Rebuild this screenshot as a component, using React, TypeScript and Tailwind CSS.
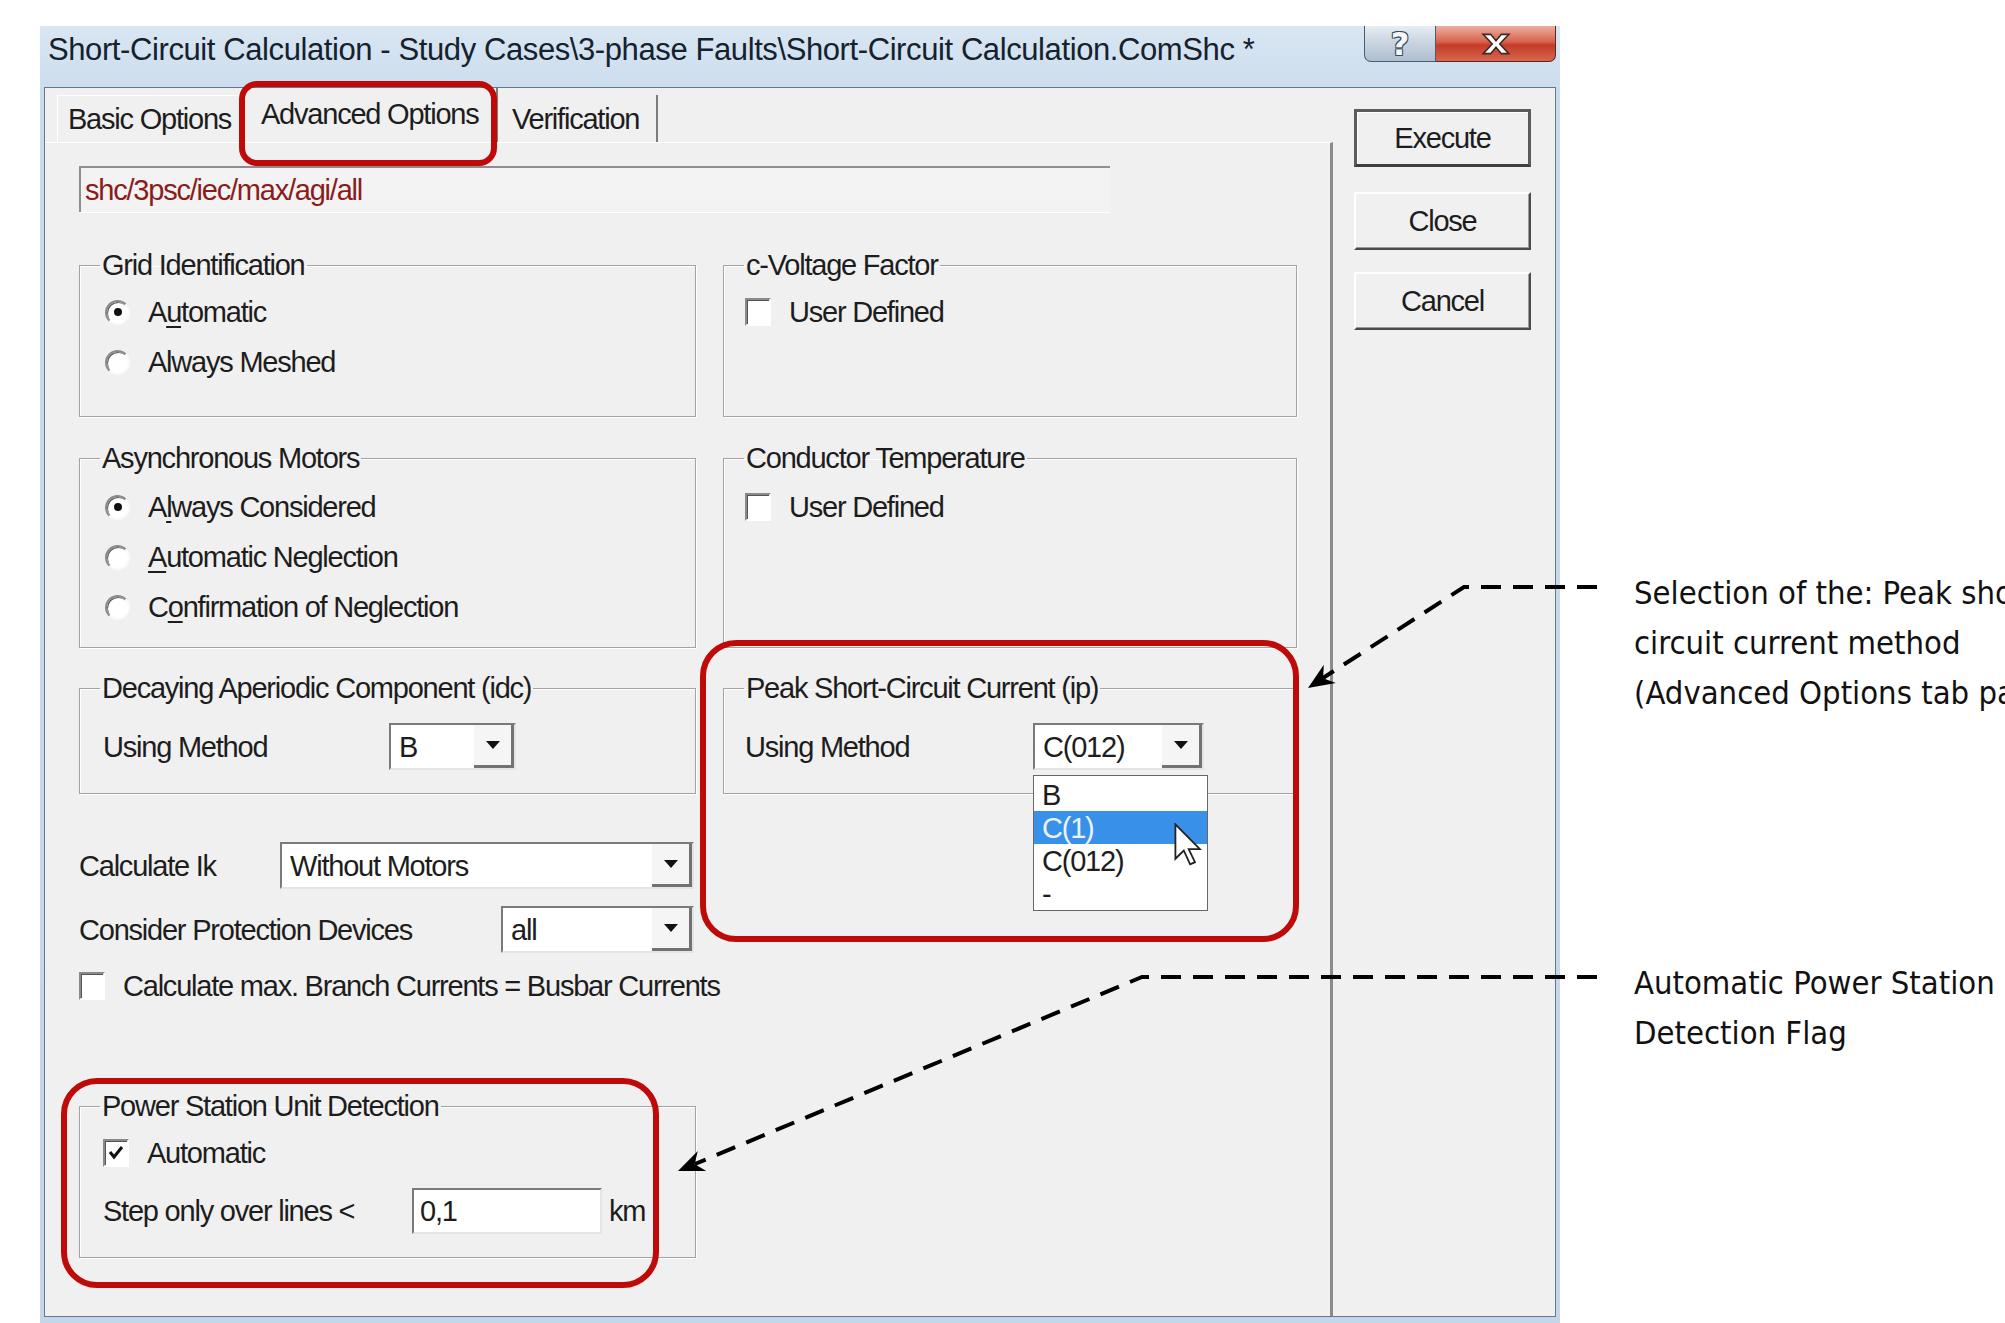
import clsx from "clsx";
import type { ReactNode } from "react";

const ui = "font-['Liberation_Sans',Arial,sans-serif]";
const note = "font-['DejaVu_Sans_Condensed','DejaVu_Sans',sans-serif]";

function Radio({ checked = false }: { checked?: boolean }) {
  return (
    <span className="flex h-[25px] w-[25px] shrink-0 items-center justify-center rounded-full border-2 border-t-[#8a8a8a] border-l-[#8a8a8a] border-b-[#fafafa] border-r-[#fafafa] bg-white shadow-[inset_1px_1px_0_#5c5c5c]">
      {checked && <span className="h-[8px] w-[8px] rounded-full bg-[#111]" />}
    </span>
  );
}

function Check({ checked = false }: { checked?: boolean }) {
  return (
    <span className="flex h-[28px] w-[26px] shrink-0 items-center justify-center border-2 border-t-[#8a8a8a] border-l-[#8a8a8a] border-b-white border-r-white bg-white shadow-[inset_1px_1px_0_#555]">
      {checked && (
        <svg width="18" height="18" viewBox="0 0 18 18">
          <path d="M3 8 L7 13 L15 3" stroke="#111" strokeWidth="3" fill="none" />
        </svg>
      )}
    </span>
  );
}

function Combo({ value, className }: { value: string; className: string }) {
  return (
    <div
      className={clsx(
        "flex h-[47px] shrink-0 border-2 border-t-[#7a7a7a] border-l-[#7a7a7a] border-b-[#e4e4e4] border-r-[#e4e4e4] bg-white",
        className,
      )}
    >
      <span className="flex flex-1 items-center pl-[8px]">{value}</span>
      <span className="flex w-[40px] items-center justify-center border-b-[3px] border-r-[3px] border-[#727272] bg-[#f5f5f5]">
        <svg width="14" height="8" viewBox="0 0 14 8">
          <path d="M0 0H14L7 8Z" fill="#111" />
        </svg>
      </span>
    </div>
  );
}

function Group({ title, className, children }: { title: string; className: string; children?: ReactNode }) {
  return (
    <fieldset
      className={clsx(
        "shrink-0 border border-[#a3a3a3] shadow-[inset_1px_1px_0_#fff,1px_1px_0_#fff]",
        className,
      )}
    >
      <legend className="ml-[20px] px-[2px]">{title}</legend>
      {children}
    </fieldset>
  );
}

function Option({ mark, children }: { mark: ReactNode; children: ReactNode }) {
  return (
    <div className="flex h-[50px] items-center gap-[18px]">
      {mark}
      <span>{children}</span>
    </div>
  );
}

function Button({ label, primary = false }: { label: string; primary?: boolean }) {
  return (
    <div
      className={clsx(
        "flex h-[58px] w-[177px] items-center justify-center bg-[#f0f0f0]",
        primary
          ? "border-[3px] border-[#5b5b5b] border-b-[#3f3f3f] shadow-[inset_1px_1px_0_#fff]"
          : "border-2 border-t-white border-l-white border-b-[#4a4a4a] border-r-[#4a4a4a] shadow-[inset_-1px_-1px_0_#9a9a9a]",
      )}
    >
      {label}
    </div>
  );
}

function Arrows() {
  return (
    <svg className="pointer-events-none absolute left-0 top-0" width="2005" height="1323">
      <g stroke="#000" strokeWidth="4" strokeDasharray="20 12" fill="none">
        <path d="M1597 587 H1464 L1323 678" />
        <path d="M1597 977 H1142 L695 1164" />
      </g>
      <polygon points="1308,688 1335.8,683.1 1323.1,678.2 1323.8,664.7" fill="#000" />
      <polygon points="678,1171 706.2,1171.1 694.6,1164.1 697.8,1150.9" fill="#000" />
    </svg>
  );
}

export default function App() {
  return (
    <div className="relative flex h-[1323px] w-[2005px] overflow-hidden whitespace-nowrap bg-white">
      {/* dialog window */}
      <div
        className={clsx(
          ui,
          "ml-[40px] mt-[26px] flex h-[1297px] w-[1520px] shrink-0 flex-col bg-[linear-gradient(180deg,#d9e6f3_0%,#c9dbec_6%,#c3d6ea_100%)] px-[4px] pb-[6px] text-[29px] leading-[36px] tracking-[-0.042em] text-[#1d1d1d]",
        )}
      >
        <div className="flex h-[61px] items-start justify-between">
          <span className="pl-[4px] pt-[6px] text-[31px] tracking-[-0.013em] text-[#15212d]">
            {"Short-Circuit Calculation - Study Cases\\3-phase Faults\\Short-Circuit Calculation.ComShc *"}
          </span>
          <div className="flex">
            <div className="flex h-[36px] w-[72px] items-center justify-center rounded-bl-[7px] border border-t-0 border-[#4d5d70] bg-[linear-gradient(180deg,#e7edf3_0%,#c7d3df_50%,#aebfd1_100%)]">
              <span className="font-['DejaVu_Sans',sans-serif] text-[32px] font-bold leading-none tracking-normal text-[#f4f7fa] [text-shadow:1px_1px_0_#3b4a5c,-1px_-1px_0_#3b4a5c,1px_-1px_0_#3b4a5c,-1px_1px_0_#3b4a5c]">
                ?
              </span>
            </div>
            <div className="flex h-[36px] w-[120px] items-center justify-center rounded-br-[7px] border border-l-0 border-t-0 border-[#5a2a22] bg-[linear-gradient(180deg,#eab0a2_0%,#d9624d_45%,#c43b27_55%,#d8674f_100%)]">
              <svg width="30" height="24" viewBox="0 0 28 22">
                <path
                  d="M2 2H9L14 8L19 2H26L17.5 11L26 20H19L14 14L9 20H2L10.5 11Z"
                  fill="#fff"
                  stroke="#3d2a28"
                  strokeWidth="1.5"
                />
              </svg>
            </div>
          </div>
        </div>

        <div className="flex flex-1 border border-[#66788d] bg-[#f0f0f0]">
          {/* tab control */}
          <div className="flex w-[1288px] shrink-0 flex-col">
            <div className="flex h-[54px] items-end pl-[12px]">
              <div className="flex h-[47px] w-[182px] items-center border-l border-t border-white pl-[10px]">
                Basic Options
              </div>
              <div className="flex h-[54px] w-[259px] items-start border-r-2 border-[#7c7c7c] pl-[22px] pt-[8px]">
                Advanced Options
              </div>
              <div className="flex h-[47px] w-[160px] items-center border-r-2 border-[#7c7c7c] pl-[14px]">
                Verification
              </div>
            </div>

            <div className="flex flex-1 flex-col border-r-[3px] border-t border-r-[#8b8b8b] border-t-white pl-[34px]">
              {/* command line */}
              <div className="mt-[23px] flex h-[46px] w-[1031px] items-center border-l-2 border-t-2 border-[#8e8e8e] bg-[#f3f3f3] pl-[4px] text-[#8a1c1c] shadow-[0_1px_0_#fff]">
                shc/3psc/iec/max/agi/all
              </div>

              <div className="mt-[35px] flex gap-[27px]">
                <Group title="Grid Identification" className="h-[170px] w-[617px]">
                  <div className="pl-[25px] pt-[4px]">
                    <Option mark={<Radio checked />}>
                      A<span className="underline underline-offset-4">u</span>tomatic
                    </Option>
                    <Option mark={<Radio />}>Always Meshed</Option>
                  </div>
                </Group>
                <Group title="c-Voltage Factor" className="h-[170px] w-[574px]">
                  <div className="pl-[21px] pt-[4px]">
                    <Option mark={<Check />}>User Defined</Option>
                  </div>
                </Group>
              </div>

              <div className="mt-[23px] flex gap-[27px]">
                <Group title="Asynchronous Motors" className="h-[208px] w-[617px]">
                  <div className="pl-[25px] pt-[6px]">
                    <Option mark={<Radio checked />}>
                      A<span className="underline underline-offset-4">l</span>ways Considered
                    </Option>
                    <Option mark={<Radio />}>
                      <span className="underline underline-offset-4">A</span>utomatic Neglection
                    </Option>
                    <Option mark={<Radio />}>
                      C<span className="underline underline-offset-4">o</span>nfirmation of Neglection
                    </Option>
                  </div>
                </Group>
                <Group title="Conductor Temperature" className="h-[208px] w-[574px]">
                  <div className="pl-[21px] pt-[6px]">
                    <Option mark={<Check />}>User Defined</Option>
                  </div>
                </Group>
              </div>

              <div className="mt-[22px] flex gap-[27px]">
                <Group title="Decaying Aperiodic Component (idc)" className="h-[124px] w-[617px]">
                  <div className="flex items-center pl-[23px] pt-[17px]">
                    <span className="w-[286px] shrink-0">Using Method</span>
                    <Combo value="B" className="w-[127px]" />
                  </div>
                </Group>
                <Group title="Peak Short-Circuit Current (ip)" className="h-[124px] w-[572px]">
                  <div className="flex items-center pl-[21px] pt-[17px]">
                    <span className="w-[288px] shrink-0">Using Method</span>
                    <div className="relative">
                      <Combo value="C(012)" className="w-[171px]" />
                      <div className="absolute left-0 top-[52px] z-10 flex h-[136px] w-[175px] flex-col border border-[#676767] bg-white pt-[2px]">
                        <div className="flex h-[33px] items-center pl-[8px]">B</div>
                        <div className="flex h-[33px] items-center bg-[#3990e8] pl-[8px] text-[#eaf3ff]">C(1)</div>
                        <div className="flex h-[33px] items-center pl-[8px]">C(012)</div>
                        <div className="flex h-[33px] items-center pl-[8px]">-</div>
                        <svg
                          className="absolute left-[140px] top-[47px]"
                          width="28"
                          height="44"
                          viewBox="0 0 20 32"
                          preserveAspectRatio="none"
                        >
                          <path d="M1 1 V26 L7 20 L11.5 30 L15 28.5 L10.5 19 H18.5 Z" fill="#fff" stroke="#222" strokeWidth="1.3" />
                        </svg>
                      </div>
                    </div>
                  </div>
                </Group>
              </div>

              <div className="mt-[48px] flex items-center">
                <span className="w-[201px] shrink-0">Calculate Ik</span>
                <Combo value="Without Motors" className="w-[414px]" />
              </div>
              <div className="mt-[17px] flex items-center">
                <span className="w-[422px] shrink-0">Consider Protection Devices</span>
                <Combo value="all" className="w-[193px]" />
              </div>
              <div className="mt-[13px]">
                <div className="flex h-[40px] items-center gap-[18px]">
                  <Check />
                  <span>Calculate max. Branch Currents = Busbar Currents</span>
                </div>
              </div>

              <div className="mt-[82px]">
                <Group title="Power Station Unit Detection" className="h-[170px] w-[617px]">
                  <div className="pl-[23px] pt-[4px]">
                    <Option mark={<Check checked />}>Automatic</Option>
                    <div className="mt-[10px] flex items-center">
                      <span className="w-[309px] shrink-0">Step only over lines &lt;</span>
                      <div className="flex h-[46px] w-[190px] items-center border-2 border-t-[#7a7a7a] border-l-[#7a7a7a] border-b-[#e4e4e4] border-r-[#e4e4e4] bg-white pl-[6px]">
                        0,1
                      </div>
                      <span className="ml-[7px]">km</span>
                    </div>
                  </div>
                </Group>
              </div>
            </div>
          </div>

          {/* command buttons */}
          <div className="flex flex-col pl-[21px] pt-[21px]">
            <Button label="Execute" primary />
            <div className="mt-[25px]">
              <Button label="Close" />
            </div>
            <div className="mt-[22px]">
              <Button label="Cancel" />
            </div>
          </div>
        </div>
      </div>

      {/* annotations */}
      <div className={clsx(note, "ml-[74px] flex shrink-0 flex-col pt-[568px] text-[32.5px] leading-[50px] text-[#111]")}>
        <p>Selection of the: Peak short-</p>
        <p>circuit current method</p>
        <p>(Advanced Options tab page)</p>
        <p className="mt-[240px]">Automatic Power Station</p>
        <p>Detection Flag</p>
      </div>

      {/* highlight frames */}
      <div className="pointer-events-none absolute left-[239px] top-[81px] h-[85px] w-[258px] rounded-[18px] border-[6px] border-[#bf0a0a]" />
      <div className="pointer-events-none absolute left-[700px] top-[640px] h-[302px] w-[599px] rounded-[36px] border-[6px] border-[#bf0a0a]" />
      <div className="pointer-events-none absolute left-[61px] top-[1078px] h-[210px] w-[598px] rounded-[36px] border-[6px] border-[#bf0a0a]" />

      <Arrows />
    </div>
  );
}
